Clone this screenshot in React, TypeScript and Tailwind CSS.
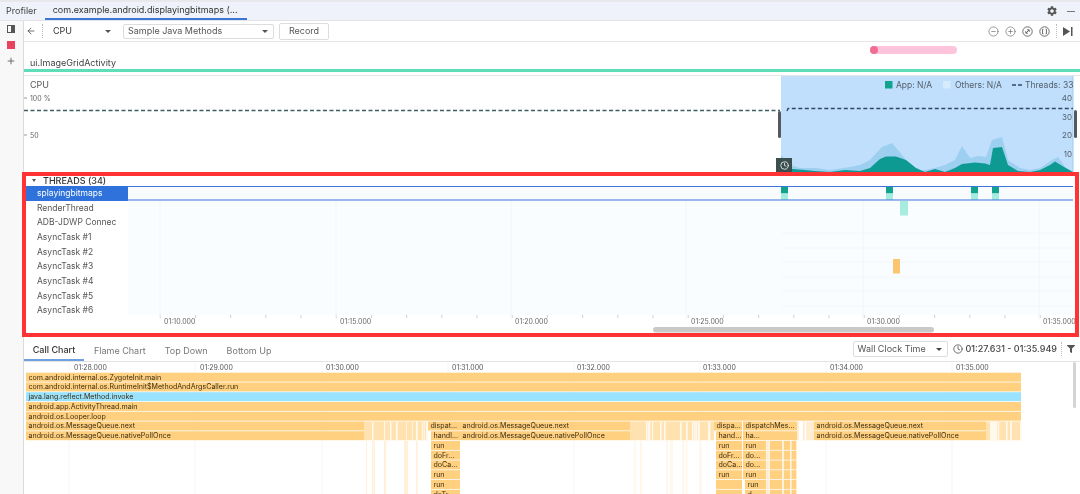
import { CircleMinus, CirclePlus, Clock, Plus, ArrowLeft } from "lucide-react";
import { MdSettings } from "react-icons/md";
import { FaFilter } from "react-icons/fa";

const threads = [
  "splayingbitmaps",
  "RenderThread",
  "ADB-JDWP Connec",
  "AsyncTask #1",
  "AsyncTask #2",
  "AsyncTask #3",
  "AsyncTask #4",
  "AsyncTask #5",
  "AsyncTask #6",
];

const rowY = (i: number) => 372.7 + i * 9.75;

// solid full-width rows of the call chart
const topRows = [
  { label: "com.android.internal.os.ZygoteInit.main", fill: "#ffd080" },
  { label: "com.android.internal.os.RuntimeInit$MethodAndArgsCaller.run", fill: "#ffd080" },
  { label: "java.lang.reflect.Method.invoke", fill: "#99e3ff" },
  { label: "android.app.ActivityThread.main", fill: "#ffd080" },
  { label: "android.os.Looper.loop", fill: "#ffd080" },
];

// [row, x, width, label]
const blocks: [number, number, number, string][] = [
  [5, 26, 338, "android.os.MessageQueue.next"],
  [6, 26, 338, "android.os.MessageQueue.nativePollOnce"],
  [5, 428, 32, "dispat..."],
  [6, 431, 29, "handl..."],
  [7, 431, 29, "run"],
  [8, 431, 29, "doFr..."],
  [9, 431, 29, "doCa..."],
  [10, 431, 29, "run"],
  [11, 431, 29, "run"],
  [12, 431, 29, "doTr..."],
  [5, 460, 170, "android.os.MessageQueue.next"],
  [6, 460, 170, "android.os.MessageQueue.nativePollOnce"],
  [5, 714, 28, "dispa..."],
  [6, 716, 26, "hand..."],
  [7, 716, 26, "run"],
  [8, 716, 26, "doFr..."],
  [9, 716, 26, "doCa..."],
  [10, 716, 26, "run"],
  [11, 716, 26, ""],
  [12, 716, 26, ""],
  [5, 743, 54, "dispatchMes..."],
  [6, 743, 54, "ha..."],
  [7, 743, 54, "run"],
  [8, 743, 54, "do..."],
  [9, 743, 54, "do..."],
  [10, 743, 54, "run"],
  [11, 745, 52, "run"],
  [12, 745, 52, "d"],
  [5, 814, 172, "android.os.MessageQueue.next"],
  [6, 814, 172, "android.os.MessageQueue.nativePollOnce"],
];

function stripes(from: number, to: number, top: number, bottom: number, seed: number, fill: string, cut = 0.5) {
  const out: { x: number; w: number }[] = [];
  let s = seed;
  const next = () => {
    s = (s * 16807) % 2147483647;
    return s / 2147483647;
  };
  for (let x = from; x < to; x += 2) {
    if (next() > cut) out.push({ x, w: 0.8 + next() * 1.6 });
  }
  return out.map((r) => (
    <rect key={`${seed}-${r.x}`} x={r.x} y={top} width={r.w} height={bottom - top} fill={fill} />
  ));
}

function ZoomIcon({ kind }: { kind: "fit" | "bracket" }) {
  return (
    <svg width="11" height="11" viewBox="0 0 14 14" fill="none" stroke="#666" strokeWidth="1.2">
      <circle cx="7" cy="7" r="6" />
      {kind === "fit" ? (
        <path d="M5 9l4-4M6.5 4.8H9.2V7.5M4.8 6.5V9.2H7.5" />
      ) : (
        <path d="M5.6 4H4.5v6h1.1M8.4 4h1.1v6H8.4" />
      )}
    </svg>
  );
}

function CpuChart() {
  return (
    <svg viewBox="24 76 1056 96" width="1056" height="96" className="absolute left-0 top-0">
      <rect x="781" y="76" width="292" height="96" fill="#bfdffc" />
      <path d="M1073 76V172" stroke="#9ccbf5" />
      <path
        d="M781 172V155L790 165L800 168L815 168L830 170L850 167L860 165L870 160L882 147L892 143L902 155L915 172L925 170L935 168L945 165L955 160L962 146L970 158L978 156L986 157L992 140L1002 137L1008 160L1020 168L1030 170L1040 168L1052 160L1058 157L1066 168L1073 172Z"
        fill="#9ccff0"
      />
      <path
        d="M781 172V168L805 170L815 171L830 172L845 170L860 171L870 168L880 159L886 156.5L896 156.5L906 160L916 168L925 172L935 169L945 172L955 168L962 164L975 162.5L985 163.5L990 165L993 148L1002 147L1008 165L1018 171L1030 172L1040 170L1050 165L1055 161.5L1064 167L1073 172Z"
        fill="#0d9a92"
      />
      <path d="M24 110.5H780" stroke="#3f5f5f" strokeWidth="1.3" strokeDasharray="4 2.5" />
      <path d="M787 111L788 108.5H1073" stroke="#2f4a66" strokeWidth="1.3" strokeDasharray="4 2.5" fill="none" />
      <path d="M24 98H27M24 135H27" stroke="#999" />
      <text x="30" y="101" fontSize="7" fill="#666">100 %</text>
      <text x="30" y="138" fontSize="7" fill="#666">50</text>
      {[
        ["40", 101],
        ["30", 119.5],
        ["20", 138],
        ["10", 157],
      ].map(([label, y]) => (
        <text key={label} x="1072" y={y} fontSize="8" fill="#55606a" textAnchor="end">
          {label}
        </text>
      ))}
      <rect x="778" y="111" width="3" height="27" rx="1.5" fill="#55595e" />
      <rect x="1074" y="110" width="3" height="28" rx="1.5" fill="#55595e" />
      <rect x="885" y="81" width="7.5" height="7.5" fill="#12a38f" />
      <text x="896" y="88" fontSize="8.5" fill="#55606a">App: N/A</text>
      <rect x="943" y="81" width="7.5" height="7.5" fill="#d6ecfb" />
      <text x="955" y="88" fontSize="8.5" fill="#55606a">Others: N/A</text>
      <path d="M1012 85H1022" stroke="#2f4a66" strokeWidth="1.3" strokeDasharray="4 2" />
      <text x="1025" y="88" fontSize="8.5" fill="#55606a">Threads: 33</text>
    </svg>
  );
}

function ThreadTrack() {
  const ticks: number[] = [];
  for (let x = 125; x < 1073; x += 35.2) ticks.push(x);
  const labels = [
    ["01:10.000", 164, 160],
    ["01:15.000", 340, 336],
    ["01:20.000", 515, 511],
    ["01:25.000", 691, 686],
    ["01:30.000", 867, 863],
    ["01:35.000", 1043, 1039],
  ] as const;
  return (
    <svg viewBox="128 186 952 150" width="952" height="150" className="absolute left-0 top-0">
      <rect x="128" y="186" width="945" height="129" fill="#fafdff" />
      {[232, 247, 261, 276, 290, 305].map((y) => (
        <rect key={y} x="782" y={y} width="291" height="2" fill="#f6fafc" />
      ))}
      {ticks.map((x) => (
        <path key={x} d={`M${x} 315V318`} stroke="#bbb" strokeWidth="0.7" />
      ))}
      {labels.map(([label, x, line]) => (
        <g key={label}>
          <path d={`M${line} 200V321`} stroke="#f1f4f6" strokeWidth="0.8" />
          <text x={x} y="324" fontSize="7" fill="#666">
            {label}
          </text>
        </g>
      ))}
      <rect x="128" y="186.5" width="945" height="14" fill="#f8fcff" />
      {[781, 886, 971, 992].map((x) => (
        <g key={x}>
          <rect x={x} y="187" width="7" height="6.5" fill="#12a38f" />
          <rect x={x} y="193.5" width="7" height="6.5" fill="#a5ebe0" />
        </g>
      ))}
      <rect x="900" y="201" width="8" height="14.5" fill="#a8ebe0" />
      <rect x="893" y="259" width="7" height="14.5" fill="#fcc671" />
      <path d="M128 186.5H1073M128 200H1073" stroke="#3f74d8" strokeWidth="1" />
      <rect x="653" y="327" width="281" height="5.5" rx="2.7" fill="#c9c9c9" />
    </svg>
  );
}

function FlameChart() {
  const lines = [69, 195, 322, 448, 574, 700, 826, 952];
  const rulerX = [74, 200, 326, 452, 577, 703, 830, 956];
  const splitTop = rowY(5);
  const splitBottom = rowY(7) - 0.7;
  return (
    <svg viewBox="24 362 1056 132" width="1056" height="132" className="absolute left-0 top-0">
      {lines.map((x) => (
        <path key={x} d={`M${x} 362V494`} stroke="#f3f3f3" strokeWidth="0.8" />
      ))}
      {rulerX.map((x, i) => (
        <text key={x} x={x} y="370" fontSize="7" fill="#555">
          {`01:${28 + i}.000`}
        </text>
      ))}
      {topRows.map((row, i) => (
        <g key={row.label}>
          <rect x="26" y={rowY(i)} width="995" height="9" fill={row.fill} />
          <text x="28.5" y={rowY(i) + 7} fontSize="7.1" fill="#3d2e12">
            {row.label}
          </text>
        </g>
      ))}
      <rect x="364" y={splitTop} width="64" height={splitBottom - splitTop} fill="#ffe2b0" />
      <rect x="630" y={splitTop} width="84" height={splitBottom - splitTop} fill="#ffe2b0" />
      <rect x="797" y={splitTop} width="17" height={splitBottom - splitTop} fill="#ffeed4" />
      <rect x="986" y={splitTop} width="35" height={splitBottom - splitTop} fill="#ffe2b0" />
      {stripes(364, 428, splitTop, splitBottom, 11, "#fff8ec", 0.62)}
      {stripes(630, 714, splitTop, splitBottom, 23, "#fff8ec", 0.62)}
      {stripes(797, 814, splitTop, splitBottom, 37, "#ffffff", 0.6)}
      {stripes(986, 1021, splitTop, splitBottom, 41, "#fff8ec", 0.62)}
      {stripes(364, 430, rowY(7), 494, 53, "#fff0d8", 0.6)}
      {stripes(632, 714, rowY(7), 494, 59, "#fff7ea", 0.7)}
      {blocks.map(([row, x, w, label]) => (
        <g key={`${row}-${x}`}>
          <rect x={x} y={rowY(row)} width={w} height="9" fill="#ffd080" />
          <text x={x + 2.5} y={rowY(row) + 7} fontSize="7.1" fill="#3d2e12">
            {label}
          </text>
        </g>
      ))}
      {stripes(764, 797, rowY(7), 494, 67, "#fff3df", 0.72)}
      <rect x="1073" y="362" width="3" height="46" rx="1.5" fill="#d4d4d4" />
    </svg>
  );
}

export default function App() {
  return (
    <div
      className="relative flex h-[494px] w-[1080px] flex-col overflow-hidden bg-white text-[#555] blur-[0.35px]"
      style={{ fontFamily: "Inter, 'Liberation Sans', sans-serif" }}
    >
      {/* tool window header */}
      <header className="flex h-[21px] shrink-0 items-center border-b border-t-2 border-[#e2e4ea] border-t-[#e8e8ea] bg-[#eff2fb] text-[9px]">
        <span className="ml-[6px] text-[#444]">Profiler</span>
        <div className="ml-[8px] flex h-full w-[202px] items-center whitespace-nowrap border-b-2 border-[#3b76d4] pl-[8px] text-[#333]">
          com.example.android.displayingbitmaps (...
        </div>
        <div className="ml-auto mr-[5px] flex items-center gap-[9px] text-[#555]">
          <MdSettings size={12} />
          <div className="h-px w-[8px] bg-[#777]" />
        </div>
      </header>

      <div className="flex min-h-0 flex-1">
        <aside className="flex w-[24px] shrink-0 flex-col items-center gap-[8px] border-r border-[#dcdcdc] bg-[#f8f8f8] pr-[1px] pt-[4px]">
          <div className="flex h-[8px] w-[8px] justify-end border border-[#555]">
            <div className="w-[3px] bg-[#555]" />
          </div>
          <div className="h-[8px] w-[8px] bg-[#e8425c]" />
          <Plus size={10} strokeWidth={2} color="#555" className="-mt-[1px]" />
        </aside>

        <main className="flex w-[1056px] flex-col">
          {/* toolbar */}
          <div className="flex h-[21px] shrink-0 items-center border-b border-[#e6e6e6] text-[9px]">
            <ArrowLeft size={10} color="#555" className="ml-[2px]" />
            <div className="ml-[6px] h-[14px] border-l border-dotted border-[#bbb]" />
            <div className="ml-[10px] flex w-[58px] items-center justify-between text-[#333]">
              CPU
              <div className="h-0 w-0 border-x-[3px] border-t-[3.5px] border-x-transparent border-t-[#555]" />
            </div>
            <div className="ml-[12px] flex h-[15px] w-[151px] items-center justify-between rounded-[2px] border border-[#ddd] pl-[4px] pr-[5px]">
              Sample Java Methods
              <div className="h-0 w-0 border-x-[3px] border-t-[3.5px] border-x-transparent border-t-[#555]" />
            </div>
            <button className="ml-[5px] h-[17px] w-[50px] rounded-[2px] border border-[#ddd] bg-white text-[9px] text-[#555]">
              Record
            </button>
            <div className="ml-auto flex items-center gap-[6px] pr-[7px] text-[#666]">
              <CircleMinus size={11} strokeWidth={1.4} />
              <CirclePlus size={11} strokeWidth={1.4} />
              <ZoomIcon kind="fit" />
              <ZoomIcon kind="bracket" />
              <div className="h-[14px] border-l border-dotted border-[#bbb]" />
              <svg width="10" height="9" viewBox="0 0 10 9">
                <path d="M0 0L7 4.5L0 9Z" fill="#555" />
                <rect x="8" y="0" width="1.5" height="9" fill="#555" />
              </svg>
            </div>
          </div>

          {/* activity lane */}
          <div className="relative flex h-[34px] shrink-0 flex-col justify-end border-b border-[#e6e6e6]">
            <span className="ml-[6px] text-[9px] leading-[12px] text-[#444]">ui.ImageGridActivity</span>
            <div className="mb-[3px] h-[3px] bg-[#5fdcb8]" />
            <div className="absolute left-[846px] top-[4px] h-[8px] w-[87px] rounded-full bg-[#fdc4dc]">
              <div className="h-[8px] w-[8px] rounded-full bg-[#ef6f94]" />
            </div>
          </div>

          {/* cpu usage */}
          <section className="relative h-[96px] shrink-0 pl-[6px] pt-[2px] text-[9px]">
            <CpuChart />
            <span className="relative">CPU</span>
            <div className="absolute left-[752px] top-[82px] flex h-[14px] w-[16px] items-center justify-center bg-[#3c4f4f] text-white">
              <Clock size={9} />
            </div>
          </section>

          {/* threads */}
          <section className="flex h-[164px] shrink-0 flex-col">
            <div className="flex h-[14px] items-center pl-[8px] pt-[3px] text-[9px] font-medium text-[#333]">
              <div className="mr-[7px] h-0 w-0 border-x-[2.5px] border-t-[3px] border-x-transparent border-t-[#555]" />
              THREADS (34)
            </div>
            <div className="relative flex-1 pl-[2px]">
              <div className="absolute left-[104px] top-0">
                <ThreadTrack />
              </div>
              <ul className="relative w-[102px] text-[8.5px]">
                {threads.map((name, i) => (
                  <li
                    key={name}
                    className={`flex h-[14.67px] items-center pl-[11px] ${i === 0 ? "bg-[#2f72dc] text-white" : "text-[#555]"}`}
                  >
                    {name}
                  </li>
                ))}
              </ul>
            </div>
          </section>

          {/* capture tabs */}
          <div className="flex h-[26px] shrink-0 items-center border-b border-[#e4e4e4] text-[9px]">
            <div className="flex h-full w-[60px] items-center justify-center border-b-2 border-[#6f9fe3] pt-[4px] font-medium text-[#333]">
              Call Chart
            </div>
            <span className="ml-[10px] pt-[4px] text-[#777]">Flame Chart</span>
            <span className="ml-[19px] pt-[4px] text-[#777]">Top Down</span>
            <span className="ml-[19px] pt-[4px] text-[#777]">Bottom Up</span>
            <div className="ml-auto flex items-center pr-[5px] pt-[1px]">
              <div className="flex h-[16px] w-[95px] items-center justify-between rounded-[2px] border border-[#ddd] pl-[4px] pr-[5px] text-[#555]">
                Wall Clock Time
                <div className="h-0 w-0 border-x-[3px] border-t-[3.5px] border-x-transparent border-t-[#444]" />
              </div>
              <Clock size={10} className="ml-[5px]" />
              <span className="ml-[3px] font-medium text-[#444]">01:27.631 - 01:35.949</span>
              <div className="ml-[4px] h-[14px] border-l border-dotted border-[#bbb]" />
              <FaFilter size={8} className="ml-[5px] text-[#555]" />
            </div>
          </div>

          {/* call chart */}
          <section className="relative flex-1">
            <FlameChart />
          </section>
        </main>
      </div>

      <div className="absolute left-[22px] top-[172px] h-[165px] w-[1057px] border-4 border-[#ff3333]" />
    </div>
  );
}
